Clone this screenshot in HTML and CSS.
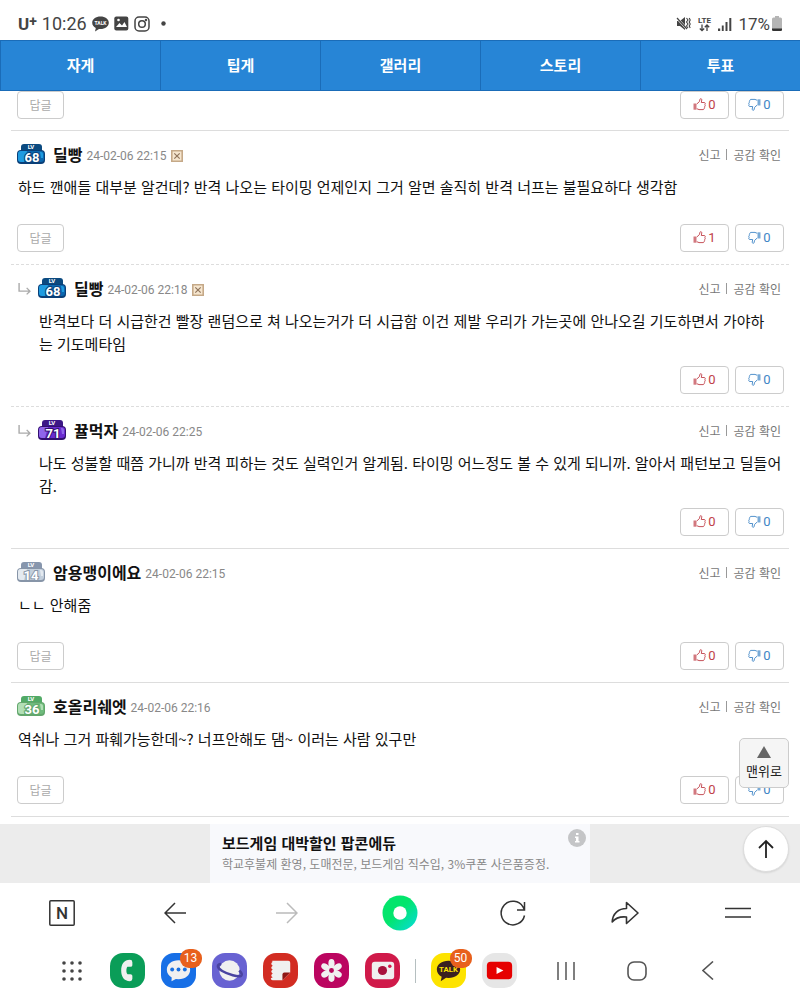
FILE: index.html
```html
<!DOCTYPE html>
<html lang="ko">
<head>
    <meta charset="UTF-8">
    <meta name="viewport" content="width=device-width, initial-scale=1.0">
    <title>댓글</title>
    <link rel="stylesheet" href="styles.css">
</head>
<body>
    <!-- shared icons -->
    <svg class="sprite" aria-hidden="true">
        <symbol id="thumb-up" viewBox="0 0 13 13">
            <path d="M.5 5.5h3v6.2h-3z" fill="currentColor" fill-opacity=".7"/>
            <path d="M3.8 6 6.4 3.6 7 1.2c.2-.9 1.8-.6 1.8.6L8.3 4.5h2.8c1.3 0 1.5 1.5.7 1.9.8.4.6 1.6-.2 1.8.5.5.2 1.5-.4 1.7.2.9-.3 1.7-1.2 1.7H6l-2.2-.9" fill="none" stroke="currentColor" stroke-width=".9"/>
        </symbol>
        <symbol id="thumb-down" viewBox="0 0 13 13">
            <path d="M9.5 1.3h3v6.2h-3z" fill="currentColor" fill-opacity=".7"/>
            <path d="M9.2 7 6.6 9.4 6 11.8c-.2.9-1.8.6-1.8-.6l.5-2.7H1.9C.6 8.5.4 7 1.2 6.6.4 6.2.6 5 1.4 4.8.9 4.3 1.2 3.3 1.8 3.1 1.6 2.2 2.1 1.4 3 1.4h4l2.2.9" fill="none" stroke="currentColor" stroke-width=".9"/>
        </symbol>
        <symbol id="lv-shape" viewBox="0 0 28 20">
            <rect x="4" y="0" width="21" height="10" rx="3" fill="var(--cap)"/>
            <rect x="0" y="6" width="28" height="14" rx="4" fill="var(--edge)"/>
            <rect x="1" y="7" width="26" height="11" rx="3" fill="var(--fill)"/>
            <path d="M4 7h6L7 18H4q-3 0-3-3v-5q0-3 3-3z" fill="var(--shine)"/>
            <path d="M23 8h1q2 0 2 2v4h-2z" fill="var(--shine)"/>
        </symbol>
        <symbol id="reply-arrow" viewBox="0 0 12 12">
            <path d="M1 0v7.5h10M8 4.5l3 3-3 3" fill="none" stroke="currentColor" stroke-width="1.3"/>
        </symbol>
        <symbol id="box-x" viewBox="0 0 12 12">
            <path d="M.8.8h10.400v10.400H.8z" fill="#f6e6cf" stroke="#c5a988" stroke-width="1.6"/>
            <path d="m3.300 3.300 5.400 5.400m0-5.400L3.300 8.700" stroke="#8f755c" stroke-width="1.2"/>
        </symbol>
    </svg>

    <div class="status-bar">
        <div class="status-left">
            <span class="carrier">U<sup>+</sup></span>
            <span>10:26</span>
            <svg width="17" height="16" viewBox="0 0 17 16"><path d="M8.500.5C3.800.5.2 3.200.2 6.800c0 2.300 1.400 4.200 3.600 5.300L3 15.500l4-2.500 1.500.1c4.700 0 8.300-2.700 8.300-6.300S13.200.5 8.500.5z" fill="#444"/><text x="8.500" y="9" class="tiny-talk">TALK</text></svg>
            <svg width="15" height="15" viewBox="0 0 15 15"><rect x=".3" y=".5" width="14" height="14" rx="2" fill="#444"/><path d="m2 11 3.500-4 2.500 2.500L10.500 6l2.500 5z" fill="#fff"/><circle cx="4.500" cy="4" r="1.300" fill="#fff"/></svg>
            <svg width="16" height="16" viewBox="0 0 16 16" fill="none" stroke="#444" stroke-width="1.5"><rect x="1" y="1" width="14" height="14" rx="4"/><circle cx="8" cy="8" r="3.300"/><circle cx="12" cy="4" r=".5"/></svg>
            <svg class="more-dot" width="5" height="5" viewBox="0 0 5 5"><circle cx="2.500" cy="2.500" r="2.200" fill="#444"/></svg>
        </div>
        <div class="status-right">
            <svg width="15" height="15" viewBox="0 0 15 15"><path d="M1 5h3l5-4v13l-5-4H1z" fill="#444"/><path d="m0 1 11 12" stroke="#fff" stroke-width="2.200"/><path d="m1 2 10 11" stroke="#444" stroke-width="1.200"/><path d="m10.500 2 1.500 2-1.500 2L12 8l-1.500 2 1.500 2M13.200 2l1 2-1 2 1 2-1 2 1 2" fill="none" stroke="#444" stroke-width="1.100"/></svg>
            <svg width="15" height="16" viewBox="0 0 15 16"><text x="7.500" y="7" class="lte">LTE</text><path d="M5 8.500V15m-2.200-2.500L5 14.700l2.200-2.200M10 15V9m-2.200 2.300L10 9l2.200 2.300" fill="none" stroke="#444" stroke-width="1.300"/></svg>
            <svg width="14" height="14" viewBox="0 0 14 14" fill="#444"><path d="M0 11.500h2.200V14H0zM3.800 8.500h1.900V14H3.800zM7.500 5h2v9h-2zM11.300 1h2v13h-2z"/></svg>
            <span class="battery-text">17%</span>
            <svg width="10" height="15" viewBox="0 0 10 15"><path d="M3 0h4v1.500h1.500q1.500 0 1.500 1.500v10.500q0 1.500-1.500 1.500h-7Q0 15 0 13.500V3q0-1.500 1.500-1.500H3z" fill="#b5b5b5"/><path d="M0 12.500h10v1q0 1.500-1.500 1.500h-7Q0 15 0 13.500z" fill="#333"/></svg>
        </div>
    </div>

    <nav class="board-nav">
        <a href="#">자게</a>
        <a href="#">팁게</a>
        <a href="#">갤러리</a>
        <a href="#">스토리</a>
        <a href="#">투표</a>
    </nav>

    <main class="comments">
        <div class="actions actions-first">
            <button class="reply-button">답글</button>
            <div class="votes">
                <button class="vote up" aria-label="추천"><svg><use href="#thumb-up"/></svg>0</button>
                <button class="vote down" aria-label="비추천"><svg><use href="#thumb-down"/></svg>0</button>
            </div>
        </div>

        <article class="comment">
            <div class="comment-head">
                <svg class="level lv-blue" viewBox="0 0 28 20"><use href="#lv-shape"/><text x="14" y="5" class="lv">LV</text><text x="15" y="18" class="num">68</text></svg>
                <strong>딜빵</strong>
                <time>24-02-06 22:15</time>
                <svg class="box-x"><use href="#box-x"/></svg>
                <div class="links"><a href="#">신고</a><i></i><a href="#">공감 확인</a></div>
            </div>
            <p>하드 깬애들 대부분 알건데? 반격 나오는 타이밍 언제인지 그거 알면 솔직히 반격 너프는 불필요하다 생각함</p>
            <div class="actions">
                <button class="reply-button">답글</button>
                <div class="votes">
                    <button class="vote up" aria-label="추천"><svg><use href="#thumb-up"/></svg>1</button>
                    <button class="vote down" aria-label="비추천"><svg><use href="#thumb-down"/></svg>0</button>
                </div>
            </div>
        </article>

        <article class="comment reply">
            <div class="comment-head">
                <svg class="reply-arrow"><use href="#reply-arrow"/></svg>
                <svg class="level lv-blue" viewBox="0 0 28 20"><use href="#lv-shape"/><text x="14" y="5" class="lv">LV</text><text x="15" y="18" class="num">68</text></svg>
                <strong>딜빵</strong>
                <time>24-02-06 22:18</time>
                <svg class="box-x"><use href="#box-x"/></svg>
                <div class="links"><a href="#">신고</a><i></i><a href="#">공감 확인</a></div>
            </div>
            <p>반격보다 더 시급한건 빨장 랜덤으로 쳐 나오는거가 더 시급함 이건 제발 우리가 가는곳에 안나오길 기도하면서 가야하<br>는 기도메타임</p>
            <div class="actions">
                <div class="votes">
                    <button class="vote up" aria-label="추천"><svg><use href="#thumb-up"/></svg>0</button>
                    <button class="vote down" aria-label="비추천"><svg><use href="#thumb-down"/></svg>0</button>
                </div>
            </div>
        </article>

        <article class="comment reply">
            <div class="comment-head">
                <svg class="reply-arrow"><use href="#reply-arrow"/></svg>
                <svg class="level lv-purple" viewBox="0 0 28 20"><use href="#lv-shape"/><text x="14" y="5" class="lv">LV</text><text x="15" y="18" class="num">71</text></svg>
                <strong>뀰먹자</strong>
                <time>24-02-06 22:25</time>
                <div class="links"><a href="#">신고</a><i></i><a href="#">공감 확인</a></div>
            </div>
            <p>나도 성불할 때쯤 가니까 반격 피하는 것도 실력인거 알게됨. 타이밍 어느정도 볼 수 있게 되니까. 알아서 패턴보고 딜들어<br>감.</p>
            <div class="actions">
                <div class="votes">
                    <button class="vote up" aria-label="추천"><svg><use href="#thumb-up"/></svg>0</button>
                    <button class="vote down" aria-label="비추천"><svg><use href="#thumb-down"/></svg>0</button>
                </div>
            </div>
        </article>

        <article class="comment">
            <div class="comment-head">
                <svg class="level lv-silver" viewBox="0 0 28 20"><use href="#lv-shape"/><text x="14" y="5" class="lv">LV</text><text x="14" y="18" class="num">14</text></svg>
                <strong>암용맹이에요</strong>
                <time>24-02-06 22:15</time>
                <div class="links"><a href="#">신고</a><i></i><a href="#">공감 확인</a></div>
            </div>
            <p>ㄴㄴ 안해줌</p>
            <div class="actions">
                <button class="reply-button">답글</button>
                <div class="votes">
                    <button class="vote up" aria-label="추천"><svg><use href="#thumb-up"/></svg>0</button>
                    <button class="vote down" aria-label="비추천"><svg><use href="#thumb-down"/></svg>0</button>
                </div>
            </div>
        </article>

        <article class="comment">
            <div class="comment-head">
                <svg class="level lv-green" viewBox="0 0 28 20"><use href="#lv-shape"/><text x="14" y="5" class="lv">LV</text><text x="15" y="18" class="num">36</text></svg>
                <strong>호올리쉐엣</strong>
                <time>24-02-06 22:16</time>
                <div class="links"><a href="#">신고</a><i></i><a href="#">공감 확인</a></div>
            </div>
            <p>역쉬나 그거 파훼가능한데~? 너프안해도 댐~ 이러는 사람 있구만</p>
            <div class="actions">
                <button class="reply-button">답글</button>
                <div class="votes">
                    <button class="vote up" aria-label="추천"><svg><use href="#thumb-up"/></svg>0</button>
                    <button class="vote down" aria-label="비추천"><svg><use href="#thumb-down"/></svg>0</button>
                </div>
            </div>
        </article>

        <button class="to-top">
            <svg width="14" height="12" viewBox="0 0 14 12"><path d="m7 0 7 12H0z" fill="#666"/></svg>
            맨위로
        </button>
    </main>

    <aside class="ad">
        <a class="ad-card" href="#">
            <strong>보드게임 대박할인 팝콘에듀</strong>
            <span>학교후불제 환영, 도매전문, 보드게임 직수입, 3%쿠폰 사은품증정.</span>
            <svg class="ad-info" width="18" height="18" viewBox="0 0 18 18"><circle cx="9" cy="9" r="9" fill="#c4c5c7"/><path d="M8 4h2.500v2H8zM7 7.500h3.500V12h1v1.500H7V12h1V9H7z" fill="#fff"/></svg>
        </a>
        <button class="scroll-up" aria-label="위로">
            <svg width="16" height="20" viewBox="0 0 16 20" fill="none" stroke="#222" stroke-width="1.800"><path d="M8 19V2M1 9l7-7 7 7"/></svg>
        </button>
    </aside>

    <nav class="toolbar">
        <button aria-label="홈"><svg width="26" height="26" viewBox="0 0 26 26"><rect x=".8" y=".8" width="24.400" height="24.400" rx="1" fill="none" stroke="#333" stroke-width="1.500"/><text x="13" y="19" class="n-logo">N</text></svg></button>
        <button aria-label="뒤로"><svg width="22" height="22" viewBox="0 0 22 22" fill="none" stroke="#333" stroke-width="1.500"><path d="M22 11H1M11 1 1 11l10 10"/></svg></button>
        <button aria-label="앞으로"><svg width="22" height="22" viewBox="0 0 22 22" fill="none" stroke="#bbb" stroke-width="1.500"><path d="M0 11h21M11 1l10 10-10 10"/></svg></button>
        <button aria-label="그린닷"><svg width="36" height="36" viewBox="0 0 36 36"><defs><linearGradient id="green" x1="0" y1="0" x2="1" y2="1"><stop offset=".45" stop-color="#03e56c"/><stop offset="1" stop-color="#07dbe0"/></linearGradient></defs><circle cx="18" cy="18" r="17.500" fill="url(#green)"/><circle cx="18" cy="18" r="6.700" fill="#fff"/></svg></button>
        <button aria-label="새로고침"><svg width="26" height="26" viewBox="0 0 26 26" fill="none" stroke="#333" stroke-width="1.500"><path d="M24.500 15.500a11.800 11.800 0 1 1-1.500-8.700l1.500 3M24.500 2v8H17"/></svg></button>
        <button aria-label="공유"><svg width="28" height="24" viewBox="0 0 28 24" fill="none" stroke="#333" stroke-width="1.600" stroke-linejoin="round"><path d="M15.500 1.500 27 12 15.500 22.500V16C9 15.300 4.500 17 1.200 21 1.500 12.500 7.500 7.500 15.500 7.500z"/></svg></button>
        <button aria-label="메뉴"><svg width="26" height="12" viewBox="0 0 26 12" stroke="#333" stroke-width="1.600"><path d="M0 1.500h26M0 10h26"/></svg></button>
    </nav>

    <footer class="dock">
        <button aria-label="모든 앱"><svg width="20" height="20" viewBox="0 0 20 20" fill="#444"><circle cx="2" cy="2" r="1.800"/><circle cx="10" cy="2" r="1.800"/><circle cx="18" cy="2" r="1.800"/><circle cx="2" cy="10" r="1.800"/><circle cx="10" cy="10" r="1.800"/><circle cx="18" cy="10" r="1.800"/><circle cx="2" cy="18" r="1.800"/><circle cx="10" cy="18" r="1.800"/><circle cx="18" cy="18" r="1.800"/></svg></button>
        <div class="apps">
            <button class="app phone" aria-label="전화"><svg viewBox="0 0 36 36"><path d="M20.500 7c-6 .2-9 4.500-9 11s3 10.800 9 11q2.500 0 2.500-2.500v-3q0-1.700-2-1.700h-3c-1.500-1-1.500-6.600 0-7.600h3q2 0 2-1.700v-3Q23 7 20.500 7z" fill="#f0f0f0"/></svg></button>
            <button class="app message" aria-label="메시지"><svg viewBox="0 0 36 36"><path d="M18 7.500c-7 0-12 4-12 9.800 0 3.700 2 6.300 5 8l-.2 3.700 4.500-2.200 2.700.2c7 0 12-4 12-9.700s-5-9.800-12-9.800z" fill="#f0f0f0"/><g fill="#176fe0"><circle cx="11.500" cy="17" r="2"/><circle cx="18" cy="17" r="2"/><circle cx="24.500" cy="17" r="2"/></g></svg><span class="badge">13</span></button>
            <button class="app internet" aria-label="인터넷"><svg viewBox="0 0 36 36"><circle cx="18" cy="18" r="10.500" fill="#f0f0f0"/><path d="M9.500 11.500C5 11 4.500 15 10.500 18.500S27 25 30 23.500c1.500-1 .5-3-2-5.500" fill="none" stroke="#4943a0" stroke-width="2.600"/></svg></button>
            <button class="app notes" aria-label="노트"><svg viewBox="0 0 36 36"><path d="M10 8h16q2 0 2 2v10l-8 8H10q-2 0-2-2l2-1q-3-2 0-4-3-2 0-4-3-2 0-4-3-2 0-4-2-1 0-1z" fill="#f0f0f0"/><path d="M20 28v-6q0-2 2-2h6z" fill="#8f1715"/></svg></button>
            <button class="app gallery" aria-label="갤러리"><svg viewBox="0 0 36 36"><g fill="#f0f0f0"><ellipse id="petal" cx="18" cy="10.700" rx="3.200" ry="4.500"/><use href="#petal" transform="rotate(60 18 18)"/><use href="#petal" transform="rotate(120 18 18)"/><use href="#petal" transform="rotate(180 18 18)"/><use href="#petal" transform="rotate(240 18 18)"/><use href="#petal" transform="rotate(300 18 18)"/><circle cx="18" cy="18" r="5"/></g><circle cx="18" cy="18" r="2.500" fill="#b5095c"/></svg></button>
            <button class="app camera" aria-label="카메라"><svg viewBox="0 0 36 36"><rect x="7" y="9" width="23" height="18" rx="3" fill="#f0f0f0"/><circle cx="18" cy="18" r="4.700" fill="#a8123c"/><circle cx="25.500" cy="13.500" r="1.800" fill="#d51a4c"/></svg></button>
            <span class="divider"></span>
            <button class="app talk" aria-label="카카오톡"><svg viewBox="0 0 36 36"><path d="M18 8C11 8 6 12 6 17c0 3.500 2 6 5 7.500L10 29l5.500-3.500 2.500.2c7 0 12-3.700 12-8.700S25 8 18 8z" fill="#392020"/><text x="18" y="20" class="talk-text">TALK</text></svg><span class="badge">50</span></button>
            <button class="app youtube" aria-label="유튜브"><svg viewBox="0 0 36 36"><rect x="5" y="9" width="26" height="18" rx="4" fill="#e60000"/><path d="m15 14.500 7 3.500-7 3.500z" fill="#fff"/></svg></button>
        </div>
        <div class="system-keys">
            <button aria-label="최근 앱"><svg width="18" height="18" viewBox="0 0 18 18" stroke="#555" stroke-width="1.500"><path d="M1 0v18M9 0v18M17 0v18"/></svg></button>
            <button aria-label="홈 화면"><svg width="20" height="20" viewBox="0 0 20 20" fill="none" stroke="#555" stroke-width="1.600"><rect x="1" y="1" width="18" height="18" rx="6"/></svg></button>
            <button aria-label="이전"><svg width="12" height="19" viewBox="0 0 12 19" fill="none" stroke="#555" stroke-width="1.600"><path d="m11 .5-10 9 10 9"/></svg></button>
        </div>
    </footer>
</body>
</html>
```

FILE: styles.css
```css
* {
    box-sizing: border-box;
}
body {
    margin: 0;
    min-height: 100vh;
    display: flex;
    flex-direction: column;
    background-color: #fff;
    color: #111;
    font-family: "Noto Sans CJK KR", sans-serif;
    font-size: 15px;
}
a {
    color: inherit;
    text-decoration: none;
}
button {
    padding: 0;
    border: none;
    background: none;
    font-family: inherit;
    cursor: pointer;
}
svg {
    display: block;
    flex: none;
}
.sprite {
    position: absolute;
    width: 0;
    height: 0;
}

/* phone status bar */
.status-bar {
    height: 40px;
    padding: 7px 18px 0;
    display: flex;
    justify-content: space-between;
    color: #444;
    font-family: Roboto, sans-serif;
    font-size: 18px;
}
.status-left, .status-right {
    display: flex;
    align-items: center;
    gap: 5px;
}
.status-right {
    gap: 6px;
}
.carrier {
    font-size: 17px;
    font-weight: bold;
}
.carrier sup {
    font-size: 14px;
    line-height: 0;
    vertical-align: 4px;
}
.more-dot {
    margin-left: 6px;
}
.battery-text {
    margin-right: -4px;
    font-size: 17px;
}
.tiny-talk, .lte, .talk-text, .n-logo, .level text {
    font-family: Roboto, sans-serif;
    font-weight: bold;
    text-anchor: middle;
}
.tiny-talk {
    font-size: 5px;
    fill: #fff;
}
.lte {
    font-size: 8px;
    fill: #444;
}

.board-nav {
    height: 51px;
    display: grid;
    grid-template-columns: repeat(5, 1fr);
    background-color: #2785d6;
    border-top: 1px solid #1a6cb8;
    border-bottom: 1px solid #1a6cb8;
}
.board-nav a {
    padding-bottom: 2px;
    display: flex;
    align-items: center;
    justify-content: center;
    border-left: 1px solid #1a6cb8;
    color: #fff;
    font-weight: bold;
}

/* comments */
.comments {
    position: relative;
    flex: 1;
    padding: 0 11px 7px;
}
.comment {
    padding: 10px 5px 12px 6px;
    border-top: 1px solid #ddd;
}
.comment.reply {
    border-top-style: dashed;
}
.comment:last-of-type {
    border-bottom: 1px solid #ddd;
}
.comment-head {
    height: 26px;
    display: flex;
    align-items: center;
}
.comment-head strong {
    margin: 0 4px 0 8px;
    font-size: 16px;
}
.comment-head time {
    padding-top: 3px;
    color: #888;
    font-family: Roboto, sans-serif;
    font-size: 12px;
}
.box-x {
    width: 12px;
    height: 12px;
    margin: 3px 0 0 5px;
}
.reply-arrow {
    width: 13px;
    height: 13px;
    margin: 3px 7px 0 1px;
    color: #aaa;
}
.links {
    margin-left: auto;
    padding-right: 3px;
    display: flex;
    align-items: center;
    gap: 6px;
    color: #777;
    font-size: 12px;
}
.links i {
    width: 1px;
    height: 11px;
    background-color: #999;
}
.comment p {
    margin: 8px 0 26px 1px;
    line-height: 23px;
    word-break: break-all;
}
.reply p {
    margin: 8px 0 11px 22px;
}
.actions {
    display: flex;
}
.actions-first {
    padding: 0 5px 11px 6px;
}
.votes {
    margin-left: auto;
    display: flex;
    gap: 6px;
}
.reply-button, .vote {
    height: 28px;
    border: 1px solid #ccc;
    border-radius: 4px;
    background-color: #fff;
}
.reply-button {
    width: 47px;
    padding-bottom: 2px;
    color: #aaa;
    font-size: 12px;
}
.vote {
    width: 49px;
    padding-bottom: 1px;
    display: flex;
    align-items: center;
    justify-content: center;
    gap: 2px;
    font-family: Roboto, sans-serif;
    font-size: 13px;
}
.vote svg {
    width: 13px;
    height: 13px;
}
.up {
    color: #bf3f48;
}
.down {
    color: #3f86c6;
}

/* level badges */
.level {
    width: 28px;
    height: 20px;
}
.level .lv {
    font-size: 6px;
    fill: #fff;
}
.level .num {
    font-size: 13px;
    fill: #fff;
    stroke: var(--edge);
    stroke-width: 2px;
    paint-order: stroke;
}
.lv-blue {
    --cap: #0b4a80;
    --edge: #0a3f78;
    --fill: #0b67ae;
    --shine: #1f9be0;
}
.lv-purple {
    --cap: #3c1786;
    --edge: #32106f;
    --fill: #6a2bd0;
    --shine: #8f66ea;
}
.lv-silver {
    --cap: #8796ad;
    --edge: #8795a8;
    --fill: #c3cfdc;
    --shine: #e4eaf0;
}
.lv-green {
    --cap: #52aa66;
    --edge: #62a66c;
    --fill: #6fbb7c;
    --shine: #b2dfb6;
}

.to-top {
    position: absolute;
    right: 11px;
    bottom: 36px;
    width: 50px;
    height: 50px;
    display: flex;
    flex-direction: column;
    align-items: center;
    justify-content: center;
    gap: 3px;
    border: 1px solid #ccc;
    border-radius: 5px;
    background-color: #f5f5f5;
    color: #222;
    font-size: 13px;
}

/* bottom ad */
.ad {
    position: relative;
    height: 59px;
    display: flex;
    justify-content: center;
    background-color: #ececec;
}
.ad-card {
    position: relative;
    width: 380px;
    padding: 7px 12px;
    background-color: #f8f9fc;
}
.ad-card strong, .ad-card span {
    display: block;
}
.ad-card strong {
    line-height: 23px;
}
.ad-card span {
    color: #888;
    font-size: 12px;
    line-height: 20px;
}
.ad-info {
    position: absolute;
    top: 5px;
    right: 4px;
}
.scroll-up {
    position: absolute;
    top: 2px;
    right: 11px;
    width: 46px;
    height: 46px;
    display: flex;
    align-items: center;
    justify-content: center;
    border: 1px solid #ddd;
    border-radius: 50%;
    background-color: #fff;
    box-shadow: 0 1px 2px rgba(0, 0, 0, 0.1);
}

/* browser toolbar */
.toolbar {
    height: 59px;
    padding: 0 6px;
    display: grid;
    grid-template-columns: repeat(7, 1fr);
}
.toolbar button {
    display: flex;
    align-items: center;
    justify-content: center;
}
.n-logo {
    font-size: 17px;
    font-weight: 500;
    fill: #333;
}

/* app dock */
.dock {
    height: 57px;
    padding-right: 20px;
    display: flex;
    align-items: center;
    justify-content: center;
    gap: 20px;
}
.dock button {
    position: relative;
    width: 35px;
    height: 35px;
    display: flex;
    align-items: center;
    justify-content: center;
}
.apps {
    display: flex;
    align-items: center;
    gap: 16px;
}
.app {
    border-radius: 13px;
}
.app svg {
    width: 35px;
    height: 35px;
}
.phone {
    background-color: #0a9d58;
}
.message {
    background-color: #176fe6;
}
.internet {
    background-color: #6862d2;
}
.notes {
    background-color: #d22c22;
}
.gallery {
    background-color: #bb0560;
}
.camera {
    background-color: #d01a4a;
}
.talk {
    background-color: #fde300;
}
.youtube {
    background-color: #e6e6e6;
}
.talk-text {
    font-size: 8px;
    fill: #fde300;
}
.badge {
    position: absolute;
    top: -4px;
    right: -6px;
    width: 22px;
    height: 19px;
    border-radius: 9px;
    background-color: #e8601c;
    color: #fff;
    font-family: Roboto, sans-serif;
    font-size: 12px;
    line-height: 19px;
    text-align: center;
}
.divider {
    width: 1px;
    height: 24px;
    margin: 0 -1px;
    background-color: #b5bfc0;
}
.system-keys {
    margin-left: 12px;
    display: flex;
    gap: 36px;
}
```
